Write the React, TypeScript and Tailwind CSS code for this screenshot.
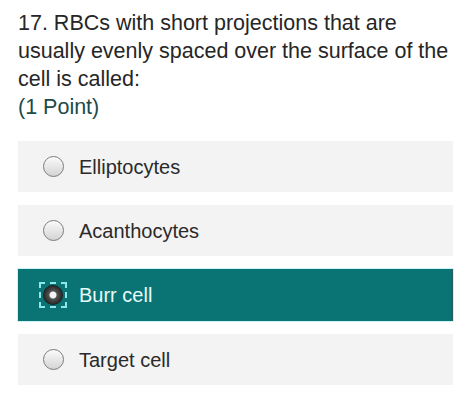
import React, { useState } from 'react';

const options = ['Elliptocytes', 'Acanthocytes', 'Burr cell', 'Target cell'];

const Radio: React.FC<{ checked: boolean }> = ({ checked }) => {
  if (checked) {
    return (
      <span className="flex items-center justify-center w-[28px] h-[26px] border-2 border-dashed border-[#8fe6ea] -ml-1">
        <span className="w-[20px] h-[20px] rounded-full bg-[radial-gradient(circle_at_50%_50%,#f5f5f5_0,#f5f5f5_3px,#555_4px,#2a2a2a_9px,#111_10px)]" />
      </span>
    );
  }
  return (
    <span className="w-[21px] h-[21px] rounded-full border border-[#7a7a7a] bg-[linear-gradient(180deg,#fafafa,#d4d4d4)] shadow-[inset_0_1px_1px_rgba(255,255,255,0.8)]" />
  );
};

export default function App() {
  const [selected, setSelected] = useState(2);

  return (
    <div className="w-[473px] h-[417px] bg-white px-[18px] pt-[9px] font-['Liberation_Sans',Arial,sans-serif]">
      <p className="w-[440px] text-[21.5px] leading-[28px] text-[#262626]">
        17. RBCs with short projections that are usually evenly spaced over the surface of the cell is called:
      </p>
      <p className="text-[21.5px] leading-[28px] text-[#1e4a4a]">(1 Point)</p>

      <div className="mt-[20px] w-[435px] flex flex-col gap-[13px]">
        {options.map((opt, i) => {
          const isSel = i === selected;
          return (
            <div
              key={opt}
              onClick={() => setSelected(i)}
              className={
                isSel
                  ? 'h-[52px] flex items-center gap-[12px] pl-[25px] bg-[#0a7475] border-r-2 border-[#2f5e5f] shadow-[0_0_0_1px_#c9f3f5] cursor-pointer'
                  : 'h-[51px] flex items-center gap-[15px] pl-[25px] bg-[#f3f3f3] cursor-pointer'
              }
            >
              <Radio checked={isSel} />
              <span className={`text-[20px] ${isSel ? 'text-[#e6fbfb]' : 'text-[#2a2a2a]'}`}>{opt}</span>
            </div>
          );
        })}
      </div>
    </div>
  );
}
